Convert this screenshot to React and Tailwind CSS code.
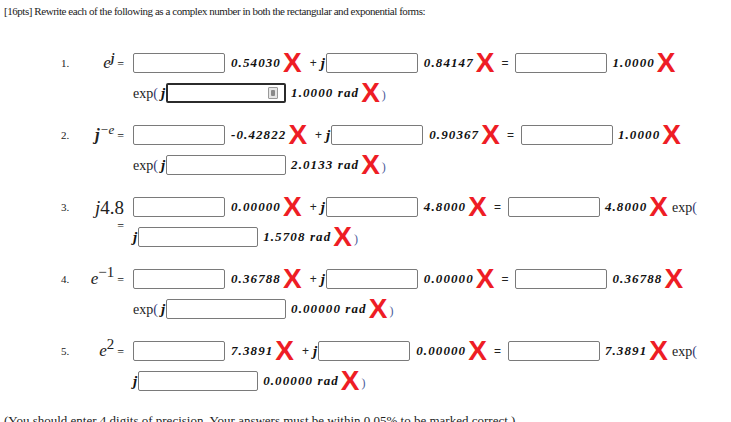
import React from "react"

const serif = { fontFamily: '"Liberation Serif", "Times New Roman", serif' }

function Box({ wide, focused }) {
  if (focused) {
    return (
      <span className="relative inline-flex h-[20px] w-[120px] items-center justify-end rounded-[2px] border-2 border-[#2b2b2b] bg-white pr-[6px]">
        {/* autofill key badge */}
        <span className="flex h-[12px] w-[10px] items-center justify-center rounded-[1px] border border-[#9a9a9a] bg-[#e6e6e6]">
          <span className="h-[6px] w-[4px] rounded-[1px] bg-[#8a8a8a]" />
        </span>
      </span>
    )
  }
  return (
    <input
      type="text"
      readOnly
      className={`h-[20px] ${wide ? "w-[120px]" : "w-[92px]"} rounded-[2px] border border-[#7a7a7a] bg-white outline-none`}
    />
  )
}

function Mark() {
  return (
    <span
      className="ml-[2px] text-[28px] leading-none font-bold text-[#ee1d25]"
      style={{ fontFamily: '"Liberation Sans", Arial, sans-serif' }}
    >
      X
    </span>
  )
}

function Val({ v, rad }) {
  return (
    <span className="flex items-center">
      <span className="text-[13px] font-bold italic tracking-[1.1px] text-[#111]" style={serif}>
        {v}
        {rad && " rad"}
      </span>
      <Mark />
    </span>
  )
}

function Plus() {
  return (
    <span className="ml-[8px] flex items-center">
      <span className="text-[12px] text-[#222]" style={{ fontFamily: '"Liberation Sans", Arial, sans-serif' }}>+</span>
      <span className="ml-[4px] mr-[1px] text-[15px] italic font-bold text-[#111]" style={serif}>j</span>
    </span>
  )
}

function Eq() {
  return (
    <span className="mx-[7px] text-[12px] text-[#222]" style={{ fontFamily: '"Liberation Sans", Arial, sans-serif' }}>
      =
    </span>
  )
}

function Exp() {
  return (
    <span className="mr-[3px] text-[14px] text-[#222]" style={serif}>
      exp<span className="text-[#3a3a7a]">(</span>
    </span>
  )
}

function J() {
  return <span className="mr-[1px] text-[15px] italic font-bold text-[#111]" style={serif}>j</span>
}

function Close() {
  return <span className="ml-[2px] mt-[4px] text-[12px] text-[#4a5a9a]" style={serif}>)</span>
}

const items = [
  {
    n: "1.",
    expr: (
      <span className="text-[17px] italic" style={serif}>
        e<sup className="text-[12px] font-bold">j</sup>
        <span className="not-italic text-[12px]"> =</span>
      </span>
    ),
    vals: ["0.54030", "0.84147", "1.0000"],
    angle: "1.0000",
    expFirst: false,
    focused: true,
  },
  {
    n: "2.",
    expr: (
      <span className="text-[17px] italic font-bold" style={serif}>
        j<sup className="text-[13px] font-normal">−e</sup>
        <span className="not-italic font-normal text-[12px]"> =</span>
      </span>
    ),
    vals: ["-0.42822", "0.90367", "1.0000"],
    angle: "2.0133",
    expFirst: false,
  },
  {
    n: "3.",
    tall: true,
    expr: (
      <span className="flex flex-col items-end leading-[20px]" style={serif}>
        <span className="text-[19px]">
          <i>j</i>4.8
        </span>
        <span className="mt-[1px] text-[12px] leading-[14px]">=</span>
      </span>
    ),
    vals: ["0.00000", "4.8000", "4.8000"],
    angle: "1.5708",
    expFirst: true,
  },
  {
    n: "4.",
    expr: (
      <span className="text-[17px] italic" style={serif}>
        e<sup className="not-italic text-[15px]">−1</sup>
        <span className="not-italic text-[12px]"> =</span>
      </span>
    ),
    vals: ["0.36788", "0.00000", "0.36788"],
    angle: "0.00000",
    expFirst: false,
  },
  {
    n: "5.",
    expr: (
      <span className="text-[17px] italic" style={serif}>
        e<sup className="not-italic text-[15px]">2</sup>
        <span className="not-italic text-[12px]"> =</span>
      </span>
    ),
    vals: ["7.3891", "0.00000", "7.3891"],
    angle: "0.00000",
    expFirst: true,
  },
]

function Item({ it }) {
  return (
    <div className="mb-[12px] flex">
      <div className="ml-[57px] flex h-[30px] w-[23px] items-center text-[11px] text-[#222]" style={serif}>
        {it.n}
      </div>
      <div className="flex w-[40px] items-start justify-end">
        <div className={it.tall ? "pt-[6px]" : "flex h-[30px] items-center"}>{it.expr}</div>
      </div>
      <div className="ml-[9px] flex flex-col">
        <div className="flex h-[30px] items-center">
          <Box />
          <span className="ml-[6px]" />
          <Val v={it.vals[0]} />
          <Plus />
          <Box />
          <span className="ml-[6px]" />
          <Val v={it.vals[1]} />
          <Eq />
          <Box />
          <span className="ml-[5px]" />
          <Val v={it.vals[2]} />
          {it.expFirst && (
            <span className="ml-[4px]">
              <Exp />
            </span>
          )}
        </div>
        <div className="flex h-[30px] items-center">
          {!it.expFirst && <Exp />}
          <J />
          <Box wide focused={it.focused} />
          <span className="ml-[5px]" />
          <Val v={it.angle} rad />
          <Close />
        </div>
      </div>
    </div>
  )
}

export default function App() {
  return (
    <div className="min-h-screen bg-white px-[4px] pt-[4px] text-[#222]" style={serif}>
      <p className="text-[11px] leading-[14px] tracking-[-0.45px]">
        [16pts] Rewrite each of the following as a complex number in both the rectangular and exponential forms:
      </p>

      <div className="mt-[30px]">
        {items.map(it => (
          <Item key={it.n} it={it} />
        ))}
      </div>

      <p className="mt-[17px] text-[13px] leading-[16px]">
        (You should enter 4 digits of precision. Your answers must be within 0.05% to be marked correct.)
      </p>
    </div>
  )
}
